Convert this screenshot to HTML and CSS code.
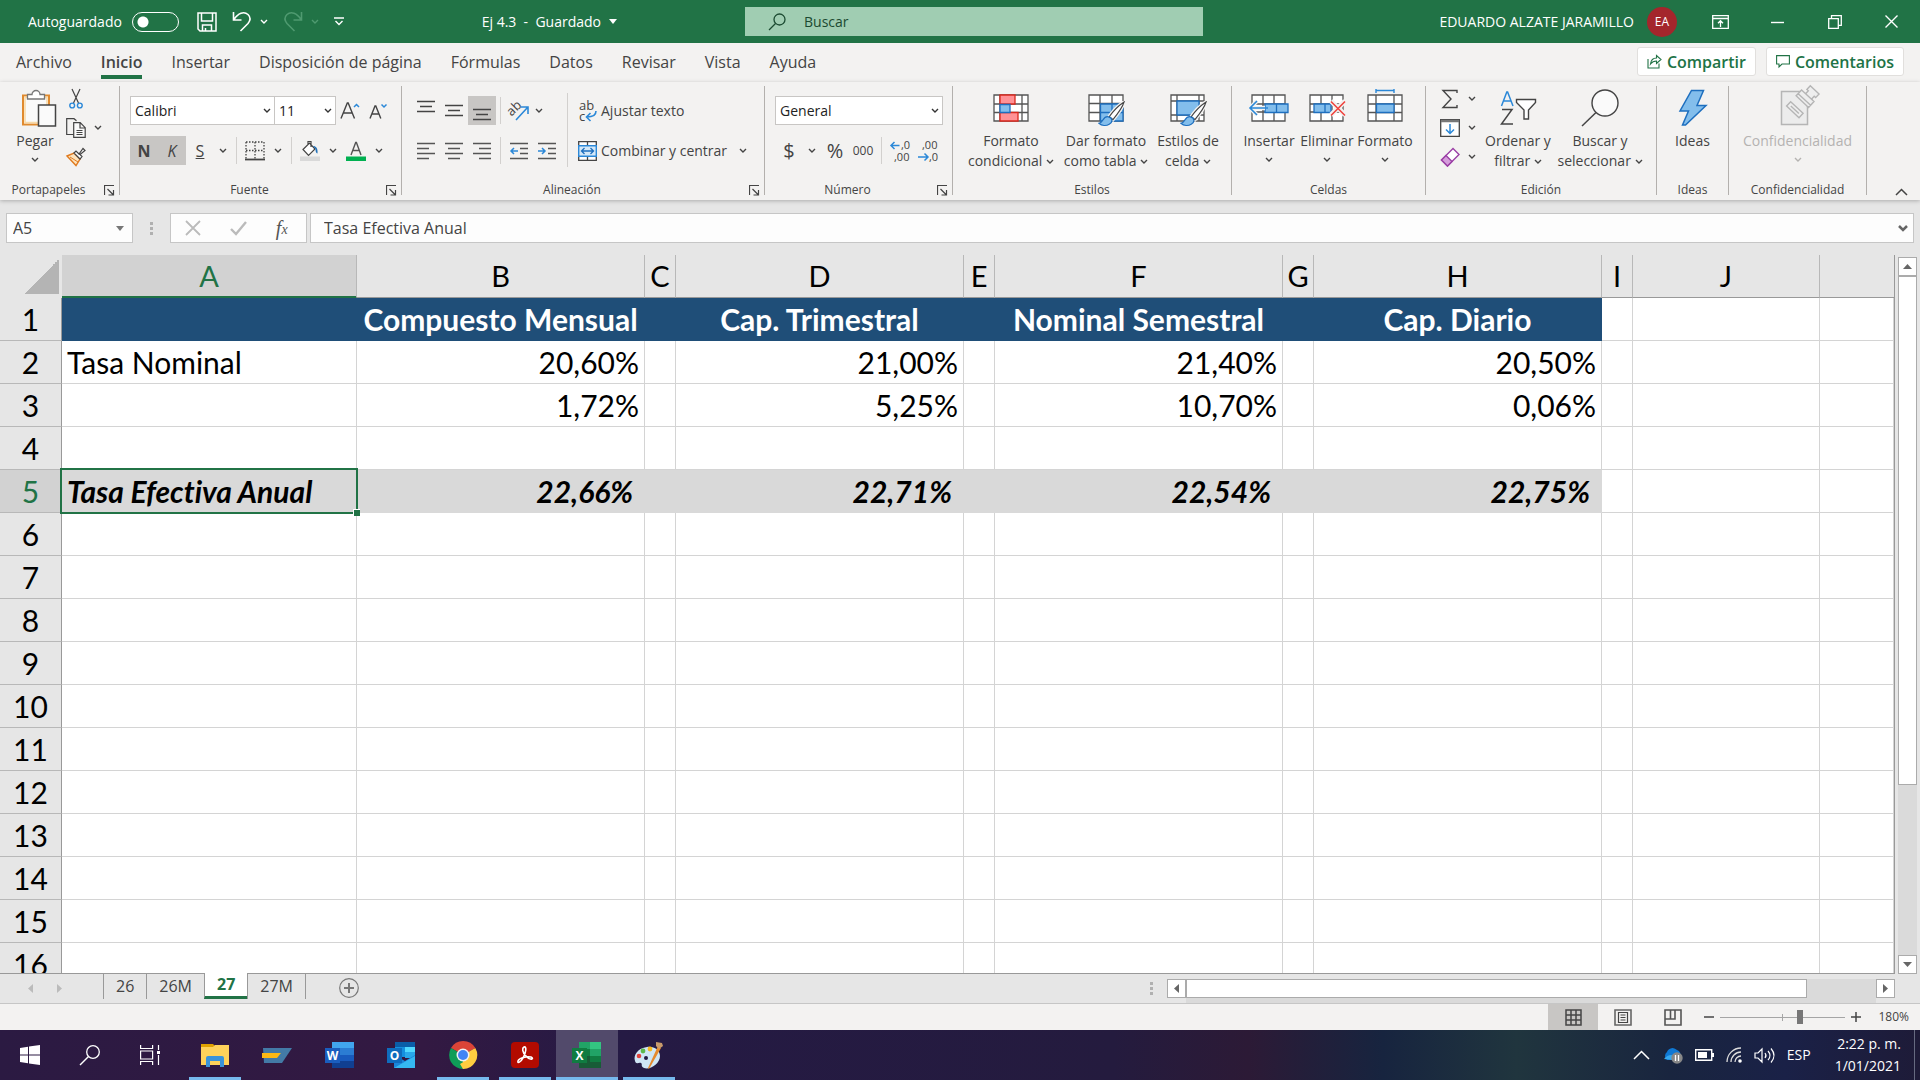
FILE: index.html
```
<!DOCTYPE html>
<html lang="es">
<head>
    <meta charset="utf-8">
    <title>Ej 4.3 - Excel</title>
    <link rel="stylesheet" href="styles.css">
</head>
<body>
    <!-- shared symbols -->
    <svg width="0" height="0" class="defs">
        <symbol id="chev" viewBox="0 0 8 6"><path d="M1 1l3 3 3-3" fill="none" stroke="currentColor" stroke-width="1.4"/></symbol>
        <symbol id="launcher" viewBox="0 0 11 11"><path d="M10 .5H.5V10M3.500 4l5.500 5.500M9.500 5v5h-5" fill="none" stroke="#444" stroke-width="1.200"/></symbol>
        <symbol id="brush" viewBox="0 0 30 28">
            <path d="M28 1C22 5 16 11 12 17l4 3C21 14 26 8 28 1z" fill="#fff" stroke="#f3f2f1" stroke-width="4"/>
            <path d="M28 1C22 5 16 11 12 17l4 3C21 14 26 8 28 1z" fill="#fff" stroke="#444" stroke-width="1.300"/>
            <path d="M1 24c5-1 4-8 10-7 5 1 5 6 1 8-3 2-8 2-11-1z" fill="#83beec" stroke="#1e6fbf" stroke-width="1.300"/>
        </symbol>
    </svg>

    <header class="titlebar">
        <div class="title-left">
            <label class="autosave">Autoguardado <input type="checkbox"></label>
            <button class="qat save" aria-label="Guardar"><svg width="20" height="20" viewBox="0 0 20 20"><path d="M1 1h18v18H3l-2-2zM4.500 1v8h11V1M5.500 19v-6h9v6M8.500 19v-3" fill="none" stroke="#fff" stroke-width="1.500"/></svg></button>
            <button class="qat" aria-label="Deshacer"><svg width="20" height="21" viewBox="0 0 20 21"><path d="M1.500 1v8h8M2 8.500C6 2 12 0 16 3.500c3 3 2.500 6 0 9L8.500 20" fill="none" stroke="#fff" stroke-width="1.600"/></svg><svg class="chev"><use href="#chev"/></svg></button>
            <button class="qat dim" aria-label="Rehacer"><svg width="20" height="21" viewBox="0 0 20 21"><path d="M18.500 1v8h-8M18 8.500C14 2 8 0 4 3.500c-3 3-2.500 6 0 9L11.500 20" fill="none" stroke="currentColor" stroke-width="1.600"/></svg><svg class="chev"><use href="#chev"/></svg></button>
            <button class="qat" aria-label="Personalizar"><svg width="10" height="9" viewBox="0 0 10 9"><path d="M0 1h10M1.500 4L5 7.500 8.500 4" fill="none" stroke="#fff" stroke-width="1.400"/></svg></button>
            <button class="doc-name">Ej 4.3&nbsp; -&nbsp; Guardado <svg width="8" height="5"><path d="M0 0h8L4 5z" fill="#fff"/></svg></button>
        </div>
        <label class="search">
            <svg width="18" height="18" viewBox="0 0 18 18"><circle cx="11.500" cy="6.500" r="5.500" fill="none" stroke="#1b4a31" stroke-width="1.300"/><path d="M7.500 10.500L1 17" stroke="#1b4a31" stroke-width="1.300"/></svg>
            <input type="text" placeholder="Buscar" aria-label="Buscar">
        </label>
        <div class="title-right">
            <span class="user">EDUARDO ALZATE JARAMILLO</span>
            <span class="avatar">EA</span>
            <button class="win" aria-label="Opciones de la cinta"><svg width="17" height="14" viewBox="0 0 17 14"><path d="M.7.700h15.600v12.600H.7zM.7 3.500h15.600M8.500 12V6M6 8.200L8.500 5.700 11 8.200" fill="none" stroke="#fff" stroke-width="1.300"/></svg></button>
            <button class="win" aria-label="Minimizar"><svg width="13" height="14"><path d="M0 7.500h13" stroke="#fff" stroke-width="1.400"/></svg></button>
            <button class="win" aria-label="Restaurar"><svg width="14" height="14" viewBox="0 0 14 14"><path d="M.7 3.700h9.600v9.600H.7zM3.500 3.500V.7h9.800v9.600H10.500" fill="none" stroke="#fff" stroke-width="1.300"/></svg></button>
            <button class="win" aria-label="Cerrar"><svg width="13" height="13"><path d="M.5.500l12 12M12.500.5l-12 12" stroke="#fff" stroke-width="1.400"/></svg></button>
        </div>
    </header>

    <nav class="tabs">
        <a href="#">Archivo</a>
        <a href="#" class="active">Inicio</a>
        <a href="#">Insertar</a>
        <a href="#">Disposición de página</a>
        <a href="#">Fórmulas</a>
        <a href="#">Datos</a>
        <a href="#">Revisar</a>
        <a href="#">Vista</a>
        <a href="#">Ayuda</a>
        <div class="tab-actions">
            <button><svg width="15" height="15" viewBox="0 0 15 15"><path d="M1 5v9h11V9.500M3.500 10c.5-4 3-6 6-6V1.500l4.500 4-4.500 4V7C7 7 5 8 3.500 10z" fill="none" stroke="#217346" stroke-width="1.100"/></svg>Compartir</button>
            <button><svg width="14" height="13" viewBox="0 0 14 13"><path d="M.6.600h12.800v8.400H6l-3 3V9H.6z" fill="none" stroke="#217346" stroke-width="1.100"/></svg>Comentarios</button>
        </div>
    </nav>

    <section class="ribbon">
        <div class="group clipboard">
            <div class="group-body">
                <button class="big paste">
                    <svg class="paste-icon" width="36" height="38" viewBox="0 0 36 38"><path d="M2 6.500h26v29H2z" fill="#fff" stroke="#e08a2e" stroke-width="2"/><path d="M4 8.500h22v25H4z" fill="#fafafa" stroke="#f8d9a6" stroke-width="1.500"/><path d="M6.500 10V5.500h4.500a4 4 0 0 1 8 0h4.500V10z" fill="#fff" stroke="#777" stroke-width="1.300"/><path d="M17.500 16h17v21h-17z" fill="#fafafa" stroke="#444" stroke-width="1.500"/></svg>
                    <span>Pegar</span>
                    <svg class="chev"><use href="#chev"/></svg>
                </button>
                <div class="stack">
                    <button class="mini" aria-label="Cortar"><svg width="20" height="20" viewBox="-3 0 20 20"><path d="M3 0l6.500 14M11 0L4.500 14" stroke="#444" stroke-width="1.200"/><circle cx="3.200" cy="16.500" r="2.400" fill="none" stroke="#2b88d8" stroke-width="1.400"/><circle cx="10.800" cy="16.500" r="2.400" fill="none" stroke="#2b88d8" stroke-width="1.400"/></svg></button>
                    <button class="mini" aria-label="Copiar"><svg width="20" height="20" viewBox="0 0 20 20"><path d="M8 16.500H.7V.7H8l2.500 2" fill="none" stroke="#444" stroke-width="1.200"/><path d="M7.700 4.700h6.500l5 5v9.600H7.700zM14 4.700V10h5M10.500 12.500h6M10.500 14.500h6M10.500 16.500h6" fill="#fafafa" stroke="#444" stroke-width="1.200"/></svg><svg class="chev"><use href="#chev"/></svg></button>
                    <button class="mini" aria-label="Copiar formato"><svg width="20" height="19" viewBox="0 0 20 19"><path d="M1 9l7-3 6 6-4 6.500z" fill="#fde3bd" stroke="#e07b1f" stroke-width="1.400"/><path d="M4 10l8 5" stroke="#e07b1f"/><path d="M8 6l2-2 3 3 4-5.500L19 3.500l-5 4 2 2-2 2.500z" fill="#fff" stroke="#444" stroke-width="1.200"/></svg></button>
                </div>
            </div>
            <div class="group-name">Portapapeles<svg class="launcher"><use href="#launcher"/></svg></div>
        </div>

        <div class="group font">
            <div class="group-body rows">
                <div class="row">
                    <select class="box font-name" aria-label="Fuente"><option>Calibri</option></select>
                    <select class="box font-size" aria-label="Tamaño"><option>11</option></select>
                    <button class="tool" aria-label="Aumentar fuente"><svg width="20" height="20" viewBox="0 0 20 20"><path d="M1 17.500L7.300 2h.9l6.300 15.500M3.300 12h9" fill="none" stroke="#444" stroke-width="1.400"/><path d="M14 6l2.500-2.500L19 6" fill="none" stroke="#2b88d8" stroke-width="1.500"/></svg></button>
                    <button class="tool" aria-label="Disminuir fuente"><svg width="20" height="20" viewBox="0 0 20 20"><path d="M2 17.500L7 5h.8l5 12.500M3.800 13h7" fill="none" stroke="#444" stroke-width="1.400"/><path d="M13.500 3.500L16 6l2.500-2.500" fill="none" stroke="#2b88d8" stroke-width="1.500"/></svg></button>
                </div>
                <div class="row">
                    <button class="tool on letter bold">N</button><button class="tool on letter italic">K</button><button class="tool letter underline">S</button>
                    <button class="drop" aria-label="Subrayado"><svg class="chev"><use href="#chev"/></svg></button>
                    <i class="sep"></i>
                    <button class="tool" aria-label="Bordes"><svg width="20" height="20" viewBox="0 0 20 20"><path d="M1 1h18M1 9.500h18M1 1v17M10 1v17M19 1v17" fill="none" stroke="#444" stroke-width="1.300" stroke-dasharray="1.500 1.500"/><path d="M0 18.500h20" stroke="#444" stroke-width="1.800"/></svg></button>
                    <button class="drop" aria-label="Más bordes"><svg class="chev"><use href="#chev"/></svg></button>
                    <i class="sep"></i>
                    <button class="tool" aria-label="Color de relleno"><svg width="20" height="20" viewBox="0 0 20 20"><path d="M3 8.500L9.500 2l5.500 6-6.500 6.500zM8 4V.5h3V6" fill="#fff" stroke="#444" stroke-width="1.200"/><path d="M13 5c3 0 5 2 4.500 7.500-1.500-.5-2-2-2-4.500z" fill="#2272b9"/><path d="M0 15.500h20v4.500H0z" fill="#d9d9d9"/></svg></button>
                    <button class="drop" aria-label="Más rellenos"><svg class="chev"><use href="#chev"/></svg></button>
                    <button class="tool" aria-label="Color de fuente"><svg width="20" height="20" viewBox="0 0 20 20"><path d="M5 14L9.700 1.500h.7L15 14M6.500 9.500h7" fill="none" stroke="#555" stroke-width="1.400"/><path d="M0 15.500h20v4.500H0z" fill="#00b050"/></svg></button>
                    <button class="drop" aria-label="Más colores"><svg class="chev"><use href="#chev"/></svg></button>
                </div>
            </div>
            <div class="group-name">Fuente<svg class="launcher"><use href="#launcher"/></svg></div>
        </div>

        <div class="group align">
            <div class="group-body">
                <div class="rows">
                    <div class="row">
                        <button class="tool" aria-label="Arriba"><svg width="18" height="22"><path d="M0 1.500h18M3 6.500h12M0 11.500h18" stroke="#444" stroke-width="1.500"/></svg></button>
                        <button class="tool" aria-label="Medio"><svg width="18" height="22"><path d="M0 5.500h18M3 10.500h12M0 15.500h18" stroke="#444" stroke-width="1.500"/></svg></button>
                        <button class="tool on" aria-label="Abajo"><svg width="18" height="22"><path d="M0 9.500h18M3 14.500h12M0 19.500h18" stroke="#444" stroke-width="1.500"/></svg></button>
                        <i class="sep"></i>
                        <button class="tool" aria-label="Orientación"><svg width="22" height="22" viewBox="0 0 22 22"><text x="0" y="14" font-size="13" fill="#444" transform="rotate(-45 5 11)">ab</text><path d="M8 20L19.500 7.500M13 7h7v7" fill="none" stroke="#2b88d8" stroke-width="1.600"/></svg></button>
                        <button class="drop narrow" aria-label="Más"><svg class="chev"><use href="#chev"/></svg></button>
                    </div>
                    <div class="row">
                        <button class="tool" aria-label="Izquierda"><svg width="18" height="18"><path d="M0 1.500h18M0 6.500h12M0 11.500h18M0 16.500h12" stroke="#555" stroke-width="1.600"/></svg></button>
                        <button class="tool" aria-label="Centro"><svg width="18" height="18"><path d="M0 1.500h18M3 6.500h12M0 11.500h18M3 16.500h12" stroke="#555" stroke-width="1.600"/></svg></button>
                        <button class="tool" aria-label="Derecha"><svg width="18" height="18"><path d="M0 1.500h18M6 6.500h12M0 11.500h18M6 16.500h12" stroke="#555" stroke-width="1.600"/></svg></button>
                        <i class="sep"></i>
                        <button class="tool" aria-label="Disminuir sangría"><svg width="18" height="18"><path d="M0 1.500h18M10 6.500h8M10 11.500h8M0 16.500h18" stroke="#555" stroke-width="1.600"/><path d="M8 9H1M4 6L1 9l3 3" fill="none" stroke="#2b88d8" stroke-width="1.500"/></svg></button>
                        <button class="tool" aria-label="Aumentar sangría"><svg width="18" height="18"><path d="M0 1.500h18M10 6.500h8M10 11.500h8M0 16.500h18" stroke="#555" stroke-width="1.600"/><path d="M0 9h7M4 6l3 3-3 3" fill="none" stroke="#2b88d8" stroke-width="1.500"/></svg></button>
                    </div>
                </div>
                <i class="long-sep"></i>
                <div class="rows">
                    <div class="row">
                        <button class="wide"><svg width="19" height="24" viewBox="0 0 19 24"><text x="1" y="11" font-size="13" fill="#444">ab</text><text x="1" y="22" font-size="13" fill="#444">c</text><path d="M18 12c0 5-4 6-9 6M12.500 14L8.500 18l4 4" fill="none" stroke="#2b88d8" stroke-width="1.600"/></svg><span>Ajustar texto</span></button>
                    </div>
                    <div class="row">
                        <button class="wide"><svg width="19" height="20" viewBox="0 0 19 20"><path d="M.7.700h17.600v18.600H.7zM9.500 1v4M9.500 15v4" fill="#fff" stroke="#444" stroke-width="1.300"/><path d="M.7 4.700h17.600v10.600H.7z" fill="#d4e8f8" stroke="#2b88d8" stroke-width="1.400"/><path d="M3.500 10h12M6.500 7l-3 3 3 3M12.500 7l3 3-3 3" fill="none" stroke="#1e6fbf" stroke-width="1.300"/></svg><span>Combinar y centrar</span></button>
                        <button class="drop merge-drop" aria-label="Más"><svg class="chev"><use href="#chev"/></svg></button>
                    </div>
                </div>
            </div>
            <div class="group-name">Alineación<svg class="launcher"><use href="#launcher"/></svg></div>
        </div>

        <div class="group number">
            <div class="group-body rows">
                <div class="row"><select class="box format" aria-label="Formato de número"><option>General</option></select></div>
                <div class="row">
                    <button class="tool sign">$</button>
                    <button class="drop" aria-label="Más"><svg class="chev"><use href="#chev"/></svg></button>
                    <button class="tool sign">%</button>
                    <button class="tool zeros">000</button>
                    <i class="sep"></i>
                    <button class="tool" aria-label="Más decimales"><svg width="20" height="24" viewBox="0 0 20 24" font-size="11" fill="#444"><text x="11" y="10">,0</text><text x="4" y="22">,00</text><path d="M9.500 6.500H1M4.500 3L1 6.500 4.500 10" fill="none" stroke="#2b88d8" stroke-width="1.500"/></svg></button>
                    <button class="tool" aria-label="Menos decimales"><svg width="20" height="24" viewBox="0 0 20 24" font-size="11" fill="#444"><text x="4" y="10">,00</text><text x="11" y="22">,0</text><path d="M0 18h10M6.500 14.500L10 18l-3.500 3.500" fill="none" stroke="#2b88d8" stroke-width="1.500"/></svg></button>
                </div>
            </div>
            <div class="group-name">Número<svg class="launcher"><use href="#launcher"/></svg></div>
        </div>

        <div class="group styles">
            <div class="group-body">
                <button class="big">
                    <svg width="40" height="38" viewBox="0 0 40 38"><path d="M3 6h34v26H3zM9 6v26M31 6v26M3 15h34M3 23.500h34" fill="#fff" stroke="#555" stroke-width="1.300"/><path d="M9 6h15v9H9zM9 23.500h18V32H9z" fill="#ff9195" stroke="#d9281e" stroke-width="1.300"/><path d="M9 15.500h10v8H9z" fill="#83beec" stroke="#1e6fbf" stroke-width="1.300"/></svg>
                    <span>Formato<br>condicional <svg class="chev"><use href="#chev"/></svg></span>
                </button>
                <button class="big">
                    <svg width="40" height="38" viewBox="0 0 40 38"><path d="M3 6h34v26H3zM14 6v26M26 6v26M3 14.500h34M3 23.500h34" fill="#fff" stroke="#555" stroke-width="1.300"/><path d="M14.500 15H37v17H14.500zM26 15v17M14.500 23.500H37" fill="#83beec" stroke="#1e6fbf" stroke-width="1.300"/><use href="#brush" x="12" y="12" width="28" height="26"/></svg>
                    <span>Dar formato<br>como tabla <svg class="chev"><use href="#chev"/></svg></span>
                </button>
                <button class="big">
                    <svg width="40" height="38" viewBox="0 0 40 38"><path d="M3 6h33v26H3zM9 6v26M31 6v26M3 12h33M3 26h33" fill="#fff" stroke="#555" stroke-width="1.300"/><path d="M9 12h22v14H9z" fill="#83beec" stroke="#1e6fbf" stroke-width="1.300"/><use href="#brush" x="12" y="12" width="28" height="26"/></svg>
                    <span>Estilos de<br>celda <svg class="chev"><use href="#chev"/></svg></span>
                </button>
            </div>
            <div class="group-name">Estilos</div>
        </div>

        <div class="group cells">
            <div class="group-body">
                <button class="big">
                    <svg width="42" height="38" viewBox="0 0 42 38"><path d="M4 6h33v26H4zM15 6v26M26 6v26M4 15h33M4 23h33" fill="#fff" stroke="#555" stroke-width="1.300"/><path d="M17 15h23v8.500H17zM28.500 15v8.500" fill="#83beec" stroke="#1e6fbf" stroke-width="1.300"/><path d="M17 19H2M9 12L2 19l7 7" fill="none" stroke="#f3f2f1" stroke-width="4"/><path d="M20 19H2M9 12L2 19l7 7" fill="none" stroke="#2b88d8" stroke-width="1.600"/></svg>
                    <span>Insertar</span><svg class="chev"><use href="#chev"/></svg>
                </button>
                <button class="big">
                    <svg width="40" height="38" viewBox="0 0 40 38"><path d="M3 6h33v26H3zM14 6v26M25 6v26M3 15h33M3 23h33" fill="#fff" stroke="#555" stroke-width="1.300"/><path d="M7 15h17v8.500H7zM18 15v8.500" fill="#83beec" stroke="#1e6fbf" stroke-width="1.300"/><path d="M24 12l14 14M38 12L24 26" stroke="#f3f2f1" stroke-width="5"/><path d="M24 12.500l14 14M38 12.500l-14 14" stroke="#f0443e" stroke-width="1.600"/></svg>
                    <span>Eliminar</span><svg class="chev"><use href="#chev"/></svg>
                </button>
                <button class="big">
                    <svg width="40" height="38" viewBox="0 0 40 38"><path d="M3 6h34v26H3zM11 6v26M29 6v26M3 15h34M3 23.500h34" fill="#fff" stroke="#555" stroke-width="1.300"/><path d="M11.500 15H29v8.500H11.500z" fill="#83beec" stroke="#1e6fbf" stroke-width="1.300"/><path d="M11 1.500h18M11 0v4M29 0v4" stroke="#2b88d8" stroke-width="1.400"/></svg>
                    <span>Formato</span><svg class="chev"><use href="#chev"/></svg>
                </button>
            </div>
            <div class="group-name">Celdas</div>
        </div>

        <div class="group editing">
            <div class="group-body">
                <div class="stack">
                    <button class="mini" aria-label="Autosuma"><svg width="20" height="20" viewBox="0 0 20 20"><path d="M17 4V1.500H3L11 10l-8 8.500h14V16" fill="none" stroke="#444" stroke-width="1.400"/></svg><svg class="chev"><use href="#chev"/></svg></button>
                    <button class="mini" aria-label="Rellenar"><svg width="20" height="18" viewBox="0 0 20 18"><path d="M.7.700h18.600v16.600H.7z" fill="#fff" stroke="#444" stroke-width="1.300"/><path d="M1 2h18" stroke="#777" stroke-width="2.500"/><path d="M10 5v9M6 10.500l4 4 4-4" fill="none" stroke="#2b88d8" stroke-width="1.500"/></svg><svg class="chev"><use href="#chev"/></svg></button>
                    <button class="mini" aria-label="Borrar"><svg width="20" height="20" viewBox="0 0 20 20"><path d="M13 1.500l6 6L7.500 19l-6-6z" fill="#fff" stroke="#9a3ea5" stroke-width="1.400"/><path d="M6 8.500l6 6L7.500 19l-6-6z" fill="#d59ddb" stroke="#9a3ea5" stroke-width="1.400"/></svg><svg class="chev"><use href="#chev"/></svg></button>
                </div>
                <button class="big">
                    <svg width="38" height="38" viewBox="0 0 38 38"><path d="M2.500 17L7.800 3h.8L14 17M4.500 12h7.500" fill="none" stroke="#2b88d8" stroke-width="1.500"/><path d="M3 20.500h10L2.500 35H14" fill="none" stroke="#444" stroke-width="1.500"/><path d="M17.500 10.500h19v3l-7 7.500v9h-4.500v-9l-7.500-7.500z" fill="#fff" stroke="#444" stroke-width="1.400"/></svg>
                    <span>Ordenar y<br>filtrar <svg class="chev"><use href="#chev"/></svg></span>
                </button>
                <button class="big">
                    <svg width="38" height="38" viewBox="0 0 38 38"><circle cx="24" cy="14" r="13" fill="#fafafa" stroke="#444" stroke-width="1.400"/><path d="M15 23.500L1 37" stroke="#444" stroke-width="1.500"/></svg>
                    <span>Buscar y<br>seleccionar <svg class="chev"><use href="#chev"/></svg></span>
                </button>
            </div>
            <div class="group-name">Edición</div>
        </div>

        <div class="group ideas">
            <div class="group-body">
                <button class="big">
                    <svg width="28" height="38" viewBox="0 0 28 38"><path d="M12.500 1.500h12L18 16.500h9L6.500 36H3.500l6-14H1z" fill="#83beec" stroke="#1e6fbf" stroke-width="1.500"/></svg>
                    <span>Ideas</span>
                </button>
            </div>
            <div class="group-name">Ideas</div>
        </div>

        <div class="group sensitivity">
            <div class="group-body">
                <button class="big" disabled>
                    <svg width="36" height="38" viewBox="0 0 36 38"><path d="M1.500 2.500h26v33h-26z" fill="#ececec" stroke="#b5b5b5" stroke-width="1.500"/><g transform="rotate(45 22 13)" stroke="#f3f2f1" stroke-width="4"><path d="M16 2h14v8H16zM20-5h6v7h-6z"/></g><g transform="rotate(43 22 13)" fill="#eee" stroke="#b5b5b5" stroke-width="1.400"><path d="M13.500 4.500h17v8h-17zM13.500 9.500h17M19 4.500v-4h-2v-5h12v5h-2v4"/><path d="M13.500 20.500h17v6h-17zM16.500 23.500h11"/></g></svg>
                    <span>Confidencialidad</span><svg class="chev"><use href="#chev"/></svg>
                </button>
            </div>
            <div class="group-name">Confidencialidad</div>
        </div>
        <button class="collapse" aria-label="Contraer la cinta"><svg width="13" height="8"><path d="M1 7l5.500-5.500L12 7" fill="none" stroke="#444" stroke-width="1.500"/></svg></button>
    </section>

    <section class="formula-bar">
        <label class="name-box"><input type="text" value="A5" aria-label="Cuadro de nombres"><svg width="8" height="5"><path d="M0 0h8L4 5z" fill="#777"/></svg></label>
        <i class="grip"></i>
        <div class="formula-buttons">
            <button aria-label="Cancelar"><svg width="16" height="14"><path d="M1 0l14 14M15 0L1 14" stroke="#bbb" stroke-width="1.800"/></svg></button>
            <button aria-label="Introducir"><svg width="17" height="14"><path d="M1 8l5 5L16 1" fill="none" stroke="#bbb" stroke-width="2.400"/></svg></button>
            <button class="fx" aria-label="Insertar función">f<small>x</small></button>
        </div>
        <label class="formula"><input type="text" value="Tasa Efectiva Anual" aria-label="Fórmula"><svg width="10" height="7"><path d="M1 1l4 4 4-4" fill="none" stroke="#666" stroke-width="2.500"/></svg></label>
    </section>

    <main class="sheet">
        <div class="sheet-view">
            <table class="grid">
                <colgroup>
                    <col class="c-head"><col class="c-label"><col class="c-value"><col class="c-gap"><col class="c-value"><col class="c-gap"><col class="c-value"><col class="c-gap"><col class="c-value"><col class="c-gap"><col class="c-std"><col>
                </colgroup>
                <thead>
                    <tr><th class="corner"></th><th class="current">A</th><th>B</th><th>C</th><th>D</th><th>E</th><th>F</th><th>G</th><th>H</th><th>I</th><th>J</th><th></th></tr>
                </thead>
                <tbody>
                    <tr class="heading"><th>1</th><td></td><td>Compuesto Mensual</td><td></td><td>Cap. Trimestral</td><td></td><td>Nominal Semestral</td><td></td><td>Cap. Diario</td><td></td><td></td><td></td></tr>
                    <tr><th>2</th><td>Tasa Nominal</td><td>20,60%</td><td></td><td>21,00%</td><td></td><td>21,40%</td><td></td><td>20,50%</td><td></td><td></td><td></td></tr>
                    <tr><th>3</th><td></td><td>1,72%</td><td></td><td>5,25%</td><td></td><td>10,70%</td><td></td><td>0,06%</td><td></td><td></td><td></td></tr>
                    <tr><th>4</th><td></td><td></td><td></td><td></td><td></td><td></td><td></td><td></td><td></td><td></td><td></td></tr>
                    <tr class="total"><th class="current">5</th><td class="selected">Tasa Efectiva Anual</td><td>22,66%</td><td></td><td>22,71%</td><td></td><td>22,54%</td><td></td><td>22,75%</td><td></td><td></td><td></td></tr>
                    <tr><th>6</th><td></td><td></td><td></td><td></td><td></td><td></td><td></td><td></td><td></td><td></td><td></td></tr>
                    <tr><th>7</th><td></td><td></td><td></td><td></td><td></td><td></td><td></td><td></td><td></td><td></td><td></td></tr>
                    <tr><th>8</th><td></td><td></td><td></td><td></td><td></td><td></td><td></td><td></td><td></td><td></td><td></td></tr>
                    <tr><th>9</th><td></td><td></td><td></td><td></td><td></td><td></td><td></td><td></td><td></td><td></td><td></td></tr>
                    <tr><th>10</th><td></td><td></td><td></td><td></td><td></td><td></td><td></td><td></td><td></td><td></td><td></td></tr>
                    <tr><th>11</th><td></td><td></td><td></td><td></td><td></td><td></td><td></td><td></td><td></td><td></td><td></td></tr>
                    <tr><th>12</th><td></td><td></td><td></td><td></td><td></td><td></td><td></td><td></td><td></td><td></td><td></td></tr>
                    <tr><th>13</th><td></td><td></td><td></td><td></td><td></td><td></td><td></td><td></td><td></td><td></td><td></td></tr>
                    <tr><th>14</th><td></td><td></td><td></td><td></td><td></td><td></td><td></td><td></td><td></td><td></td><td></td></tr>
                    <tr><th>15</th><td></td><td></td><td></td><td></td><td></td><td></td><td></td><td></td><td></td><td></td><td></td></tr>
                    <tr><th>16</th><td></td><td></td><td></td><td></td><td></td><td></td><td></td><td></td><td></td><td></td><td></td></tr>
                </tbody>
            </table>
        </div>
        <div class="vscroll">
            <button aria-label="Subir"><svg width="9" height="5"><path d="M0 5h9L4.500 0z" fill="#666"/></svg></button>
            <div class="track"><div class="thumb"></div></div>
            <button aria-label="Bajar"><svg width="9" height="5"><path d="M0 0h9L4.500 5z" fill="#666"/></svg></button>
        </div>
    </main>

    <div class="sheet-tabs">
        <div class="sheet-nav">
            <svg width="5" height="9"><path d="M5 0v9L0 4.500z" fill="#bbb"/></svg>
            <svg width="5" height="9"><path d="M0 0v9l5-4.500z" fill="#bbb"/></svg>
        </div>
        <button class="sheet-tab">26</button>
        <button class="sheet-tab">26M</button>
        <button class="sheet-tab active">27</button>
        <button class="sheet-tab last">27M</button>
        <button class="add-sheet" aria-label="Hoja nueva"><svg width="20" height="20"><circle cx="10" cy="10" r="9.300" fill="none" stroke="#777" stroke-width="1.200"/><path d="M5 10h10M10 5v10" stroke="#777" stroke-width="2"/></svg></button>
        <i class="grip"></i>
        <div class="hscroll">
            <button aria-label="Izquierda"><svg width="5" height="9"><path d="M5 0v9L0 4.500z" fill="#666"/></svg></button>
            <div class="track"><div class="thumb"></div></div>
            <button aria-label="Derecha"><svg width="5" height="9"><path d="M0 0v9l5-4.500z" fill="#666"/></svg></button>
        </div>
    </div>

    <footer class="statusbar">
        <button class="view on" aria-label="Normal"><svg width="17" height="17"><path d="M1 1h15v15H1zM6 1v15M11 1v15M1 6h15M1 11h15" fill="none" stroke="#444" stroke-width="1.500"/></svg></button>
        <button class="view" aria-label="Diseño de página"><svg width="18" height="17"><path d="M1 1h16v15H1z" fill="none" stroke="#666" stroke-width="1.600"/><path d="M4.500 3.500h9v10h-9zM6.500 6h5M6.500 8.500h5M6.500 11h5" fill="none" stroke="#444" stroke-width="1.200"/></svg></button>
        <button class="view" aria-label="Salto de página"><svg width="18" height="17"><path d="M1 1h16v15H1zM1 10h10V1M6.500 1v9" fill="none" stroke="#555" stroke-width="1.600"/></svg></button>
        <button class="zoom-step" aria-label="Alejar"><svg width="10" height="10"><path d="M0 5h10" stroke="#444" stroke-width="1.500"/></svg></button>
        <input class="zoom" type="range" min="0" max="100" value="65" aria-label="Zoom">
        <button class="zoom-step" aria-label="Acercar"><svg width="10" height="10"><path d="M0 5h10M5 0v10" stroke="#444" stroke-width="1.500"/></svg></button>
        <span class="zoom-value">180%</span>
    </footer>

    <div class="taskbar">
        <div class="system">
            <button aria-label="Inicio"><svg width="20" height="20"><path d="M0 3l8-1.200v7.700H0zM9 1.600L20 0v9.500H9zM0 10.500h8v7.700L0 17zM9 10.500h11V20L9 18.400z" fill="#fff"/></svg></button>
            <button aria-label="Buscar"><svg width="20" height="20"><circle cx="13" cy="7" r="6.300" fill="none" stroke="#fff" stroke-width="1.300"/><path d="M8.500 11.500L0 20" stroke="#fff" stroke-width="1.400"/></svg></button>
            <button aria-label="Vista de tareas"><svg width="20" height="20"><path d="M.6 0v3.500h12V0M.6 6h12v8H.6zM.6 20v-3.500h12V20M18.500 0v5M18.500 10v10" fill="none" stroke="#fff" stroke-width="1.200"/><path d="M17 6h3v3h-3z" fill="#fff"/></svg></button>
        </div>
        <button class="app open" aria-label="Explorador"><svg width="28" height="24"><path d="M0 1h12l2 2v4H0z" fill="#e0a100"/><path d="M0 4h12l2-2h14v20H0z" fill="#ffd25a"/><path d="M5 24V15q0-2 2-2h14q2 0 2 2v9h-4v-6H9v6z" fill="#3a93d9"/></svg></button>
        <button class="app" aria-label="Editor"><svg width="30" height="16"><path d="M1 1h29L20 16H2z" fill="#437aa6"/><path d="M0 6h19l-4 5H0z" fill="#fdb913"/></svg></button>
        <button class="app" aria-label="Word"><svg width="29" height="28"><path d="M7 1h22v7H7z" fill="#41a5ee"/><path d="M7 7h22v7H7z" fill="#2b7cd3"/><path d="M7 14h22v7H7z" fill="#185abd"/><path d="M7 20h22v7H7z" fill="#103f91"/><path d="M0 7h15v15H0z" fill="#1a5dbe"/><text x="7.500" y="18.500" class="app-letter">W</text></svg></button>
        <button class="app" aria-label="Outlook"><svg width="28" height="28"><path d="M8 1h20v15H8z" fill="#0a5ea8"/><path d="M8 6h10v10H8z" fill="#1490df"/><path d="M18 6h10v6H18z" fill="#50d9ff"/><path d="M18 11h10v6H18z" fill="#28a8ea"/><path d="M7 14l11 6 10-6v13H7z" fill="#1a86d9"/><path d="M7 27l21-12v12z" fill="#35b8f1"/><path d="M0 7h15v15H0z" fill="#0f6cbd"/><text x="7.500" y="18.500" class="app-letter">O</text></svg></button>
        <button class="app open" aria-label="Chrome"><svg width="28" height="28"><path d="M14 14L2 7a14 14 0 0 1 24.300 0z" fill="#db4437"/><path d="M14 14l12.300-7A14 14 0 0 1 14 28z" fill="#ffcd40"/><path d="M14 14v14A14 14 0 0 1 2 7z" fill="#0f9d58"/><path d="M14 7.500h12.500q-1-1-2-2H14z" fill="#db4437"/><path d="M20 17.500L14 28l-3-5z" fill="#ffcd40"/><circle cx="14" cy="14" r="6.500" fill="#f1f1f1"/><circle cx="14" cy="14" r="5" fill="#4285f4"/></svg></button>
        <button class="app open" aria-label="Acrobat"><svg width="28" height="26"><rect width="28" height="26" rx="4" fill="#b30b00"/><path d="M13 5c3-1 2 6-1 11-2 4-6 6-5 3s9-5 13-4c4 2-1 4-5-1-4-4-4-8-2-9z" fill="none" stroke="#fff" stroke-width="1.600"/></svg></button>
        <button class="app open active" aria-label="Excel"><svg width="30" height="28"><path d="M7 1h11v7H7z" fill="#21a366"/><path d="M18 1h11v7H18z" fill="#33c481"/><path d="M7 8h11v7H7z" fill="#107c41"/><path d="M18 8h11v7H18z" fill="#21a366"/><path d="M7 15h22v12H7z" fill="#185c37"/><path d="M18 15h11v6H18z" fill="#107c41"/><path d="M0 7h15v15H0z" fill="#107c41"/><text x="7.500" y="18.500" class="app-letter">X</text></svg></button>
        <button class="app open" aria-label="Paint"><svg width="30" height="28"><path d="M13 6C4 7-1 14 1 20c1 4 4 1 6 2s-1 3 3 5c6 2 16-4 16-12 0-6-6-10-13-9z" fill="#cfe6f5"/><circle cx="12" cy="17" r="2" fill="#241a42"/><circle cx="5" cy="15" r="2.300" fill="#e0443c"/><circle cx="9" cy="10" r="2.400" fill="#5cb84a"/><circle cx="16" cy="8" r="2.400" fill="#f5b820"/><path d="M24 5l3 2L15 28l-1-1z" fill="#e58a2d"/><path d="M22 1l6 1 1 3-4 3-3-3z" fill="#c79a6b"/></svg></button>
        <div class="tray">
            <button aria-label="Iconos ocultos"><svg width="17" height="10"><path d="M1 9l7.500-7.500L16 9" fill="none" stroke="#fff" stroke-width="1.500"/></svg></button>
            <button aria-label="OneDrive"><svg width="21" height="18"><path d="M5 14a5 5 0 0 1 0-8 6 6 0 0 1 10-2 5 5 0 0 1 3 7l-3 3z" fill="#0f78d4"/><path d="M2 13q5-6 11-3l-2 4z" fill="#35a7ee"/><circle cx="15" cy="12" r="5.700" fill="#888"/><path d="M13.500 9v6M16.500 9v6" stroke="#fff" stroke-width="1.300"/></svg></button>
            <button aria-label="Batería"><svg width="19" height="12"><path d="M.7.700h16v10.600H.7z" fill="none" stroke="#fff" stroke-width="1.400"/><path d="M3 3h9v6H3zM17 4h2v4h-2z" fill="#fff"/></svg></button>
            <button aria-label="Red"><svg width="16" height="16"><path d="M1 15A14 14 0 0 1 15 1M5 15A10 10 0 0 1 15 5M9 15a6 6 0 0 1 6-6" fill="none" stroke="#ddd" stroke-width="1.300"/><circle cx="14" cy="14" r="1.800" fill="#fff"/></svg></button>
            <button aria-label="Volumen"><svg width="21" height="17"><path d="M1 6h3l4-4v13l-4-4H1zM11 6q2 2.500 0 5M14 4q4 4.500 0 9M17 1.500q6 7 0 14" fill="none" stroke="#fff" stroke-width="1.200"/></svg></button>
            <span class="lang">ESP</span>
            <div class="clock">2:22 p. m.<br>1/01/2021</div>
            <i class="show-desktop"></i>
        </div>
    </div>
</body>
</html>
```

FILE: styles.css
```
* {
    box-sizing: border-box;
}

body {
    margin: 0;
    height: 100vh;
    overflow: hidden;
    display: flex;
    flex-direction: column;
    background-color: #e6e6e6;
    color: #444;
    font-family: "Open Sans", "Noto Sans", sans-serif;
    font-size: 14px;
    line-height: 20px;
}

button, input, select {
    font: inherit;
    color: inherit;
    border: none;
    background: none;
    padding: 0;
    margin: 0;
    border-radius: 0;
    outline: none;
}

button {
    display: flex;
    align-items: center;
    justify-content: center;
    flex: none;
    white-space: nowrap;
}

svg {
    flex: none;
    display: block;
    overflow: visible;
}

.defs {
    position: absolute;
}

.chev {
    width: 8px;
    height: 6px;
}

/* title bar */
.titlebar {
    flex: none;
    height: 43px;
    display: flex;
    align-items: center;
    background-color: #217346;
    color: #fff;
}

.title-left, .title-right {
    flex: 1;
    display: flex;
    align-items: center;
}

.title-left {
    padding-left: 28px;
}

.autosave {
    display: flex;
    align-items: center;
    gap: 10px;
}

.autosave input {
    appearance: none;
    width: 47px;
    height: 20px;
    border: 1px solid #fff;
    border-radius: 10px;
    background: radial-gradient(circle at 10px 9px, #fff 5px, transparent 6px);
}

.qat {
    gap: 8px;
    margin-left: 15px;
}

.qat.save {
    margin-left: 18px;
}

.qat.dim {
    color: #4f9a70;
}

.doc-name {
    margin-left: auto;
    margin-right: 128px;
    gap: 8px;
}

.search {
    width: 458px;
    height: 29px;
    padding-left: 23px;
    display: flex;
    align-items: center;
    gap: 18px;
    background-color: #a0cdb2;
}

.search input {
    flex: 1;
}

.search input::placeholder {
    color: #1b4a31;
    opacity: 1;
}

.title-right {
    justify-content: flex-end;
}

.avatar {
    width: 30px;
    height: 30px;
    margin: 0 15px 0 13px;
    border-radius: 50%;
    background-color: #a4262c;
    font-size: 12px;
    line-height: 30px;
    text-align: center;
}

.win {
    width: 57px;
    height: 43px;
}

/* ribbon tabs */
.tabs {
    flex: none;
    height: 39px;
    display: flex;
    gap: 29px;
    padding: 0 16px;
    background-color: #f3f2f1;
    font-size: 16px;
}

.tabs a {
    height: 36px;
    padding-top: 9px;
    color: #444;
    text-decoration: none;
    white-space: nowrap;
}

.tabs a.active {
    font-weight: 600;
    border-bottom: 4px solid #217346;
}

.tab-actions {
    margin-left: auto;
    padding-top: 4px;
    display: flex;
    gap: 10px;
}

.tab-actions button {
    height: 29px;
    padding: 0 9px;
    gap: 5px;
    border: 1px solid #e1dfdd;
    border-radius: 3px;
    background-color: #fff;
    color: #217346;
    font-weight: 600;
}

/* ribbon */
.ribbon {
    flex: none;
    height: 118px;
    padding-top: 4px;
    display: flex;
    background-color: #f3f2f1;
    position: relative;
    z-index: 1;
    box-shadow: 0 1px 4px rgba(0, 0, 0, 0.25);
}

.group {
    flex: none;
    height: 109px;
    display: flex;
    flex-direction: column;
    border-right: 1px solid #b3b0ad;
}

.group-body {
    flex: 1;
    display: flex;
}

.group-name {
    height: 14px;
    font-size: 12px;
    line-height: 18px;
    text-align: center;
    position: relative;
}

.group-name:has(.launcher) {
    padding-right: 22px;
}

.launcher {
    width: 11px;
    height: 11px;
    position: absolute;
    right: 4px;
    top: 4px;
}

.clipboard { width: 120px; }
.font { width: 282px; }
.align { width: 363px; }
.number { width: 188px; }
.styles { width: 279px; }
.cells { width: 194px; }
.editing { width: 231px; }
.ideas { width: 72px; }
.sensitivity { width: 138px; }

.rows {
    display: flex;
    flex-direction: column;
    gap: 11px;
    padding: 10px 0 0 10px;
}

.row {
    height: 29px;
    display: flex;
    align-items: center;
}

.tool {
    width: 28px;
    height: 29px;
}

.tool.on {
    background-color: #c8c6c4;
}

.letter {
    font-size: 16px;
}

.bold {
    font-weight: 700;
}

.italic {
    font-style: italic;
}

.underline {
    text-decoration: underline;
}

.sign {
    font-size: 20px;
}

.zeros {
    font-size: 12px;
}

.drop {
    width: 18px;
    height: 29px;
}

.drop.narrow {
    width: 12px;
}

.merge-drop {
    margin-left: 7px;
}

.sep {
    width: 1px;
    height: 27px;
    margin: 0 4px;
    background-color: #d2d0ce;
}

.long-sep {
    width: 1px;
    height: 74px;
    margin: 7px 0 0 5px;
    background-color: #d2d0ce;
}

.align .rows:first-child {
    width: 160px;
}

.wide {
    gap: 4px;
}

.box {
    appearance: none;
    height: 29px;
    padding: 0 4px;
    border: 1px solid #c8c6c4;
    color: #222;
    background: #fff url("data:image/svg+xml,%3Csvg xmlns='http://www.w3.org/2000/svg' width='8' height='6'%3E%3Cpath d='M1 1l3 3 3-3' fill='none' stroke='%23333' stroke-width='1.400'/%3E%3C/svg%3E") no-repeat right 3px center;
}

.font-name { width: 145px; }
.font-size { width: 62px; margin-left: -1px; }
.format { width: 168px; }

.big {
    height: 89px;
    flex-direction: column;
    justify-content: flex-start;
    padding-top: 3px;
}

.big span {
    margin-top: 4px;
}

.big span .chev {
    display: inline-block;
    vertical-align: middle;
}

.big > .chev {
    margin-top: 6px;
}

.big:disabled {
    color: #b5b3b1;
}

.paste {
    width: 56px;
    margin-left: 7px;
}

.paste-icon {
    margin-left: 8px;
}

.stack {
    display: flex;
    flex-direction: column;
}

.mini {
    height: 29px;
    padding: 0 0 4px 3px;
    justify-content: flex-start;
    gap: 8px;
}

.styles .group-body {
    padding-left: 10px;
}

.styles .big:nth-child(1) { width: 96px; }
.styles .big:nth-child(2) { width: 94px; }
.styles .big:nth-child(3) { width: 70px; }

.cells .group-body {
    padding-left: 8px;
}

.cells .big {
    width: 58px;
}

.editing .stack {
    padding-left: 11px;
}

.editing .big:nth-child(2) {
    width: 76px;
    margin-left: 4px;
}

.editing .big:nth-child(3) {
    width: 88px;
}

.ideas .big, .sensitivity .big {
    flex: 1;
}

.collapse {
    position: absolute;
    right: 12px;
    bottom: 4px;
}

/* formula bar */
.formula-bar {
    flex: none;
    height: 55px;
    padding: 13px 6px 12px;
    display: flex;
    align-items: center;
    font-size: 16px;
}

.name-box, .formula-buttons, .formula {
    height: 30px;
    display: flex;
    align-items: center;
    border: 1px solid #c6c6c6;
    background-color: #fdfdfd;
}

.name-box {
    width: 127px;
    padding: 0 8px 0 6px;
}

.name-box input, .formula input {
    flex: 1;
    min-width: 0;
}

.grip {
    flex: none;
    width: 3px;
    height: 13px;
    background: repeating-linear-gradient(#b0b0b0 0 3px, transparent 3px 5px);
}

.formula-bar .grip {
    margin: 0 17px;
}

.formula-buttons {
    width: 137px;
    margin-right: 3px;
    padding-right: 4px;
    justify-content: space-around;
}

.fx {
    font-family: "Liberation Serif", serif;
    font-style: italic;
    font-size: 20px;
    color: #555;
}

.fx small {
    font-size: 14px;
    padding-top: 4px;
}

.formula {
    flex: 1;
    padding: 0 5px 0 13px;
}

/* grid */
.sheet {
    flex: 1;
    min-height: 0;
    display: flex;
}

.sheet-view {
    flex: 1;
    overflow: hidden;
    border-right: 1px solid #999;
    border-bottom: 1px solid #999;
}

.grid {
    width: 100%;
    table-layout: fixed;
    border-collapse: separate;
    border-spacing: 0;
    color: #000;
    font-family: Lato, sans-serif;
    font-size: 30px;
    font-variant-ligatures: none;
    line-height: 42px;
}

.c-head { width: 62px; }
.c-label { width: 295px; }
.c-value { width: 288px; }
.c-gap { width: 31px; }
.c-std { width: 187px; }

.grid th, .grid td {
    height: 43px;
    padding: 0;
    border-right: 1px solid #d4d4d4;
    border-bottom: 1px solid #d4d4d4;
    white-space: nowrap;
}

.grid th {
    font-weight: 400;
    background-color: #e6e6e6;
    border-right-color: #b8b8b8;
}

.grid thead th {
    font-size: 29px;
    border-bottom-color: #999;
}

.grid thead th:last-child {
    border-right: none;
}

.grid tbody th {
    border-right-color: #999;
    border-bottom-color: #b8b8b8;
}

.grid .corner {
    border-color: #e6e6e6;
    background: linear-gradient(to bottom right, transparent 50%, #b4b4b4 50%) no-repeat 24px 4px / 35px 35px;
}

.grid th.current {
    background-color: #d2d2d2;
    color: #217346;
}

.grid thead th.current {
    box-shadow: inset 0 -1px #217346;
    border-bottom-color: #217346;
}

.grid td {
    background-color: #fff;
    padding-right: 5px;
    text-align: right;
}

.grid td:nth-child(2) {
    padding: 0 0 0 5px;
    text-align: left;
}

.heading td:nth-child(-n+9) {
    padding: 0;
    background-color: #1f4e78;
    border-color: #1f4e78;
    color: #fff;
    font-weight: 700;
    text-align: center;
}

.total td:nth-child(-n+9) {
    padding-right: 11px;
    background-color: #d9d9d9;
    border-color: #d9d9d9;
    font-weight: 700;
    font-style: italic;
}

.grid .selected {
    position: relative;
}

/* selection frame and fill handle */
.selected::before {
    content: "";
    position: absolute;
    inset: -2px;
    border: 2px solid #217346;
}

.selected::after {
    content: "";
    position: absolute;
    right: -4px;
    bottom: -4px;
    width: 6px;
    height: 6px;
    border: solid #fff;
    border-width: 1px 0 0 1px;
    background-color: #217346;
}

/* scroll bars */
.vscroll {
    width: 19px;
    margin: 2px 3px 0;
    display: flex;
    flex-direction: column;
}

.vscroll button, .hscroll button {
    width: 19px;
    height: 19px;
    border: 1px solid #ababab;
    background-color: #fff;
}

.track {
    flex: 1;
    background-color: #dadada;
}

.thumb {
    border: 1px solid #ababab;
    background-color: #fff;
}

.vscroll .thumb {
    height: 75%;
}

.hscroll .thumb {
    width: 90%;
    height: 19px;
}

.hscroll {
    width: 728px;
    margin: 5px 25px 0 14px;
    display: flex;
}

/* sheet tabs */
.sheet-tabs {
    flex: none;
    height: 30px;
    display: flex;
    border-bottom: 1px solid #c6c6c6;
}

.sheet-nav {
    width: 103px;
    padding: 10px 0 0 28px;
    display: flex;
    gap: 24px;
}

.sheet-tab {
    height: 25px;
    padding: 0 12px 2px;
    border-left: 1px solid #999;
    font-size: 16px;
}

.sheet-tab.last {
    border-right: 1px solid #999;
}

.sheet-tab.active {
    height: 26px;
    margin-top: -1px;
    background-color: #fff;
    border-bottom: 3px solid #217346;
    color: #217346;
    font-weight: 700;
}

.add-sheet {
    height: 28px;
    margin-left: 33px;
}

.sheet-tabs .grip {
    margin: 8px 0 0 auto;
}

/* status bar */
.statusbar {
    flex: none;
    height: 26px;
    padding-right: 11px;
    display: flex;
    align-items: center;
    justify-content: flex-end;
    background-color: #f3f2f1;
}

.view {
    width: 50px;
    height: 26px;
}

.view.on {
    background-color: #c8c6c4;
}

.zoom-step {
    width: 22px;
}

.zoom {
    appearance: none;
    width: 125px;
    height: 14px;
    background:
        linear-gradient(#a5a5a5, #a5a5a5) no-repeat center / 1px 7px,
        linear-gradient(#a5a5a5, #a5a5a5) no-repeat center / 100% 1px;
}

.zoom::-webkit-slider-thumb {
    appearance: none;
    width: 6px;
    height: 14px;
    background-color: #777;
}

.zoom-value {
    width: 42px;
    font-size: 12px;
    text-align: right;
}

/* taskbar */
.taskbar {
    flex: none;
    height: 50px;
    display: flex;
    background: linear-gradient(to right, #2b1a42 0%, #331942 22%, #251a44 32%, #241b3e 58%, #2c1a36 65%, #17243f 72%, #20353e 79%, #19253f 87%, #1a2147 93%, #1e1b38 100%);
    color: #fff;
}

.system {
    display: flex;
    margin-right: 4px;
}

.system button {
    width: 60px;
}

.app {
    width: 52px;
    margin: 0 5px;
    border-bottom: 3px solid transparent;
    padding-top: 3px;
}

.app.open {
    border-bottom-color: #76b9ed;
}

.app.active {
    width: 62px;
    margin: 0;
    background-color: #524a6b;
}

.app-letter {
    fill: #fff;
    font-size: 12px;
    font-weight: 700;
    text-anchor: middle;
}

.tray {
    margin-left: auto;
    display: flex;
    align-items: center;
    gap: 12px;
}

.clock {
    margin: 0 1px 0 12px;
    line-height: 22px;
    text-align: right;
}

.show-desktop {
    width: 6px;
    height: 50px;
    border-left: 1px solid #666a80;
}
```
